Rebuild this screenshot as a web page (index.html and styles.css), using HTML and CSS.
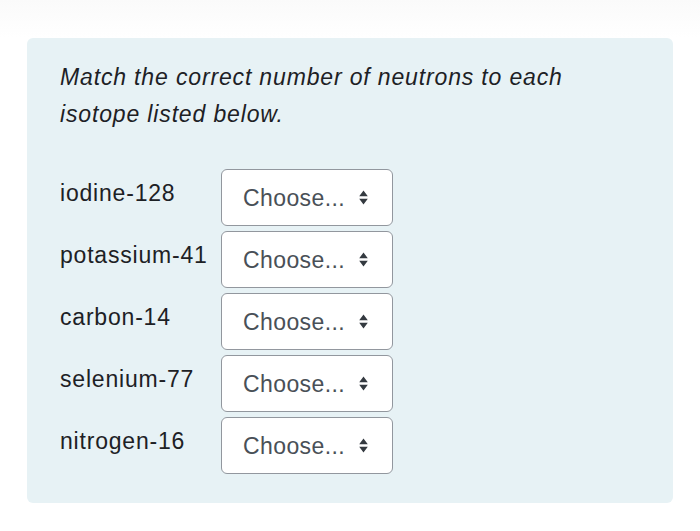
FILE: index.html
```html
<!DOCTYPE html>
<html>
<head>
<meta charset="utf-8">
<link rel="stylesheet" href="styles.css">
</head>
<body>
<div class="top"></div>
<div class="card">
  <p class="prompt">Match the correct number of neutrons to each isotope listed below.</p>
  <div class="rows">
    <div class="label">iodine-128</div>
    <div class="select"><span>Choose...</span><svg viewBox="0 0 9 15" class="arr"><path d="M4.5 0.5 L8.8 6.3 H0.2 Z M4.5 14.5 L8.8 8.7 H0.2 Z"/></svg></div>
    <div class="label">potassium-41</div>
    <div class="select"><span>Choose...</span><svg viewBox="0 0 9 15" class="arr"><path d="M4.5 0.5 L8.8 6.3 H0.2 Z M4.5 14.5 L8.8 8.7 H0.2 Z"/></svg></div>
    <div class="label">carbon-14</div>
    <div class="select"><span>Choose...</span><svg viewBox="0 0 9 15" class="arr"><path d="M4.5 0.5 L8.8 6.3 H0.2 Z M4.5 14.5 L8.8 8.7 H0.2 Z"/></svg></div>
    <div class="label">selenium-77</div>
    <div class="select"><span>Choose...</span><svg viewBox="0 0 9 15" class="arr"><path d="M4.5 0.5 L8.8 6.3 H0.2 Z M4.5 14.5 L8.8 8.7 H0.2 Z"/></svg></div>
    <div class="label">nitrogen-16</div>
    <div class="select"><span>Choose...</span><svg viewBox="0 0 9 15" class="arr"><path d="M4.5 0.5 L8.8 6.3 H0.2 Z M4.5 14.5 L8.8 8.7 H0.2 Z"/></svg></div>
  </div>
</div>
</body>
</html>
```
FILE: styles.css
```css
html, body {
  margin: 0;
  padding: 0;
  background: #ffffff;
  width: 700px;
  height: 531px;
  overflow: hidden;
  font-family: "Liberation Sans", Arial, sans-serif;
}
.top {
  height: 38px;
  background: linear-gradient(180deg, #fafafa 0%, #ffffff 100%);
}
.card {
  margin: 0 27px;
  height: 465px;
  box-sizing: border-box;
  background: #e7f2f5;
  border-radius: 6px;
  padding: 21px 0 0 33px;
}
.prompt {
  margin: 0;
  font-style: italic;
  font-size: 23px;
  letter-spacing: 0.85px;
  line-height: 37px;
  color: #1d2125;
  width: 560px;
}
.rows {
  margin-top: 36px;
  display: grid;
  grid-template-columns: 161px 172px;
  row-gap: 5px;
}
.label {
  font-size: 23px;
  letter-spacing: 0.8px;
  color: #1d2125;
  padding-top: 10px;
  line-height: 28px;
}
.select {
  height: 57px;
  box-sizing: border-box;
  background: #ffffff;
  border: 1.5px solid #92979e;
  border-radius: 6px;
  display: flex;
  align-items: center;
  padding-left: 21px;
  font-size: 23px;
  letter-spacing: 0.4px;
  color: #495057;
}
.select span {
  padding-top: 1px;
}
.arr {
  width: 9px;
  height: 15px;
  margin-left: 14px;
  fill: #343a40;
}
```
